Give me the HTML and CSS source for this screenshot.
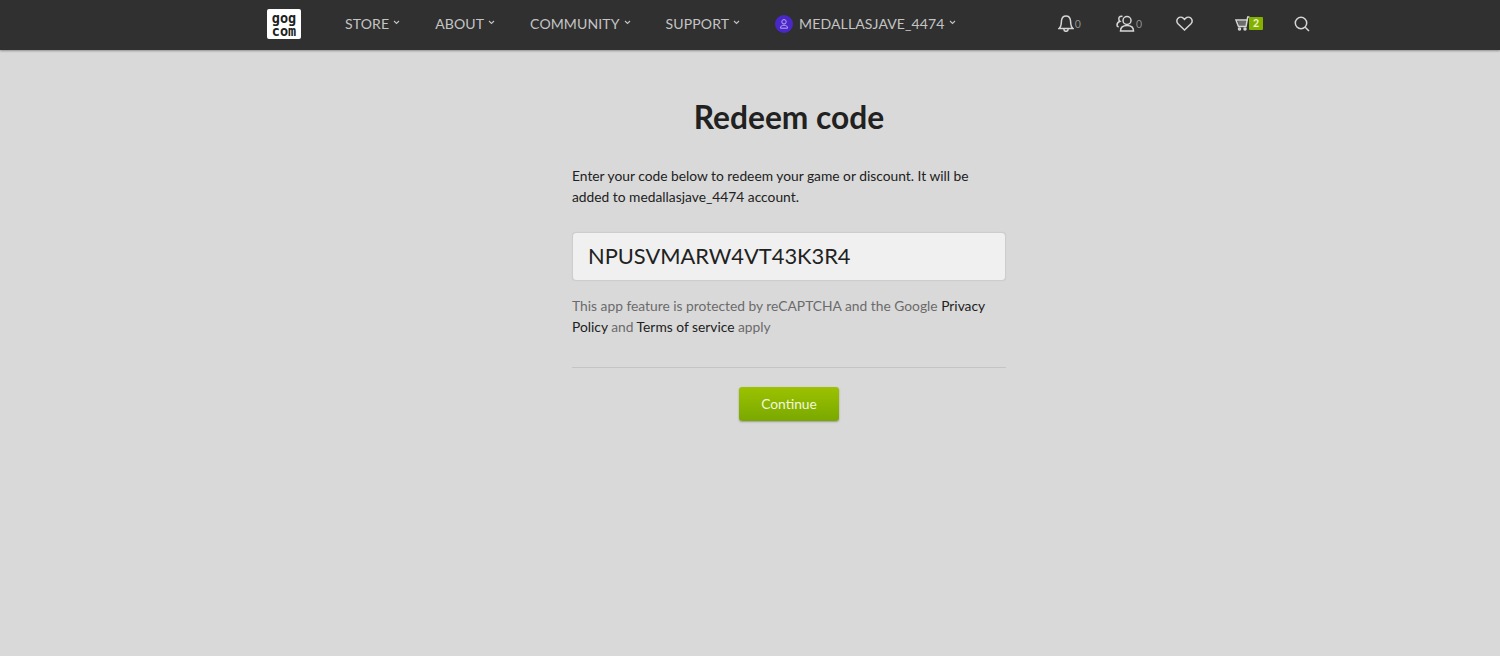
FILE: index.html
```html
<!DOCTYPE html>
<html lang="en">
<head>
<meta charset="utf-8">
<title>Redeem code</title>
<link rel="stylesheet" href="styles.css">
</head>
<body>
<header class="topbar">
  <nav class="nav">
    <a class="logo"><span class="logo-word">gog</span><span class="logo-word">com</span></a>
    <ul class="menu">
      <li class="menu-item store">STORE<svg class="chev" viewBox="0 0 7 5"><path d="M1 1l2.500 2.500L6 1"/></svg></li>
      <li class="menu-item about">ABOUT<svg class="chev" viewBox="0 0 7 5"><path d="M1 1l2.500 2.500L6 1"/></svg></li>
      <li class="menu-item community">COMMUNITY<svg class="chev" viewBox="0 0 7 5"><path d="M1 1l2.500 2.500L6 1"/></svg></li>
      <li class="menu-item support">SUPPORT<svg class="chev" viewBox="0 0 7 5"><path d="M1 1l2.500 2.500L6 1"/></svg></li>
      <li class="menu-item user">
        <svg class="avatar" viewBox="0 0 18 18"><circle class="avatar-bg" cx="9" cy="9" r="9"/><circle class="avatar-line" cx="9" cy="6.800" r="2.200"/><path class="avatar-line" d="M5.500 13.200c0-2.200 1.400-3 3.500-3s3.500.8 3.500 3z"/></svg>
        MEDALLASJAVE_4474<svg class="chev" viewBox="0 0 7 5"><path d="M1 1l2.500 2.500L6 1"/></svg>
      </li>
    </ul>
    <div class="tools">
      <div class="tool bell">
        <svg class="ico" width="16" height="17" viewBox="0 0 16 17"><path d="M1 13.500c1.500-1 2-2 2.200-4.500L3.500 5.500C3.800 3 5.500 1 8 1s4.200 2 4.500 4.500l.3 3.500c.2 2.500.7 3.500 2.200 4.500z"/><path d="M6 14v.8a2 1.500 0 0 0 4 0V14"/></svg>
        <span class="count">0</span>
      </div>
      <div class="tool friends">
        <svg class="ico" width="19" height="17" viewBox="0 0 19 17"><circle cx="11" cy="5.500" r="4"/><path d="M4.500 16c0-3.500 2.500-5.500 6.500-5.500s6.500 2 6.500 5.500z"/><path d="M6.500 1.500C5 .8 3 1.500 2.800 3.500c-.1 1.200.5 2.300 1.200 2.800-2 .6-3 2-3 4 0 1 .8 1.500 1.700 1.500"/></svg>
        <span class="count">0</span>
      </div>
      <svg class="ico heart" width="17" height="15" viewBox="0 0 17 15"><path d="M8.500 14L2 7.800C.4 6.200.5 3.600 2 2.200 3.500.8 6 .9 7.400 2.300l1.100 1.100 1.100-1.100C11 .9 13.500.8 15 2.200c1.500 1.400 1.600 4 0 5.600z"/></svg>
      <div class="tool cart">
        <svg class="ico" width="15" height="15" viewBox="0 0 15 15"><path class="cart-fill" d="M3 5h8.500l-.9 5H4z"/><path d="M14.500 1h-1.800l-1.700 9.500H3.500L1 4h12"/><circle cx="4.500" cy="13" r="1"/><circle cx="10" cy="13" r="1"/></svg>
        <span class="cart-badge">2</span>
      </div>
      <svg class="ico search" width="16" height="16" viewBox="0 0 16 16"><circle cx="7" cy="7" r="5.700"/><path d="M11.200 11.200l3.800 3.800"/></svg>
    </div>
  </nav>
</header>
<main class="page">
  <h1 class="title">Redeem code</h1>
  <p class="intro">Enter your code below to redeem your game or discount. It will be added to medallasjave_4474 account.</p>
  <input class="code" type="text" value="NPUSVMARW4VT43K3R4">
  <p class="legal">This app feature is protected by reCAPTCHA and the Google <a>Privacy</a> <a>Policy</a> and <a>Terms of service</a> apply</p>
  <hr class="rule">
  <div class="actions"><button class="continue" type="button">Continue</button></div>
</main>
</body>
</html>
```
FILE: styles.css
```css
* { box-sizing: border-box; }
html, body { margin: 0; height: 100%; }
body {
  background: #d9d9d9;
  color: #212121;
  font-family: Lato, "Noto Sans", sans-serif;
  overflow: hidden;
}
.topbar {
  height: 50px;
  background: #303030;
  box-shadow: 0 1px 2px rgba(0, 0, 0, .35);
}
.nav {
  width: 1043px;
  margin-left: 267px;
  height: 50px;
  display: flex;
  align-items: center;
}
.logo {
  width: 34px;
  height: 30px;
  margin-top: -2px;
  padding-top: 1px;
  background: #fff;
  border-radius: 2px;
  display: flex;
  flex-direction: column;
  align-items: center;
  justify-content: center;
  color: #212121;
  font-family: "DejaVu Sans Mono", monospace;
  font-weight: 700;
  font-size: 13.500px;
  line-height: 13px;
}
.logo-word { display: block; height: 13px; }
.menu {
  list-style: none;
  margin: 0 0 3px 44px;
  padding: 0;
  display: flex;
  align-items: center;
  color: #c4c4c4;
  font-size: 14.050px;
  letter-spacing: .1px;
}
.menu-item { display: flex; align-items: center; white-space: nowrap; margin-right: 35px; }
.menu-item.user { margin-right: 0; }
.chev { width: 7px; height: 5px; margin-left: 4px; margin-top: -2px; fill: none; stroke: #c4c4c4; stroke-width: 1.100; }
.avatar { width: 18px; height: 18px; margin-right: 6px; }
.avatar-bg { fill: #4a27c9; }
.avatar-line { fill: none; stroke: #b9a8f2; stroke-width: 1; }
.tools { margin-left: auto; display: flex; align-items: center; height: 50px; padding-bottom: 3px; }
.ico { fill: none; stroke: #d6d6d6; stroke-width: 1.500; flex: none; }
.tool { display: flex; align-items: center; }
.count { font-size: 10.500px; color: #8f8f8f; margin-left: 1px; }
.friends { margin-left: 35px; }
.heart { margin-left: 34px; }
.cart { margin-left: 42px; }
.cart-fill { fill: #6b6b6b; stroke: none; }
.cart-badge {
  width: 14px;
  height: 13px;
  margin-left: -1px;
  background: #84b000;
  border-radius: 1px;
  color: #eef5d2;
  font-size: 10.500px;
  font-weight: 700;
  line-height: 13px;
  text-align: center;
}
.search { margin-left: 31px; }
.page { width: 434px; margin-left: 572px; padding-top: 48px; }
.title {
  margin: 0;
  font-size: 31.700px;
  line-height: 38px;
  font-weight: 700;
  text-align: center;
  color: #212121;
}
.intro {
  margin: 29px 0 0;
  font-size: 13.800px;
  line-height: 21px;
  color: #212121;
}
.code {
  display: block;
  width: 434px;
  height: 49px;
  margin-top: 25px;
  padding: 0 15px 2px;
  background: #f0f0f0;
  border: 1px solid #cdcdcd;
  border-radius: 4px;
  box-shadow: 0 0 1px rgba(0, 0, 0, .1);
  font-family: Lato, sans-serif;
  font-size: 21.850px;
  color: #212121;
  outline: none;
}
.legal {
  margin: 14px 0 0;
  font-size: 13.800px;
  line-height: 21px;
  color: #6b6b6b;
}
.legal a { color: #212121; }
.rule { margin: 30px 0 0; height: 1px; border: 0; background: #c4c4c4; }
.actions { display: flex; justify-content: center; margin-top: 19px; }
.continue {
  width: 100px;
  height: 34px;
  padding: 0 0 2px;
  border: 0;
  border-radius: 3px;
  background: linear-gradient(#9cc200, #79a800);
  box-shadow: 0 1px 2px rgba(0, 0, 0, .3);
  color: #f2f7dc;
  font-family: Lato, sans-serif;
  font-size: 13.800px;
}
```
